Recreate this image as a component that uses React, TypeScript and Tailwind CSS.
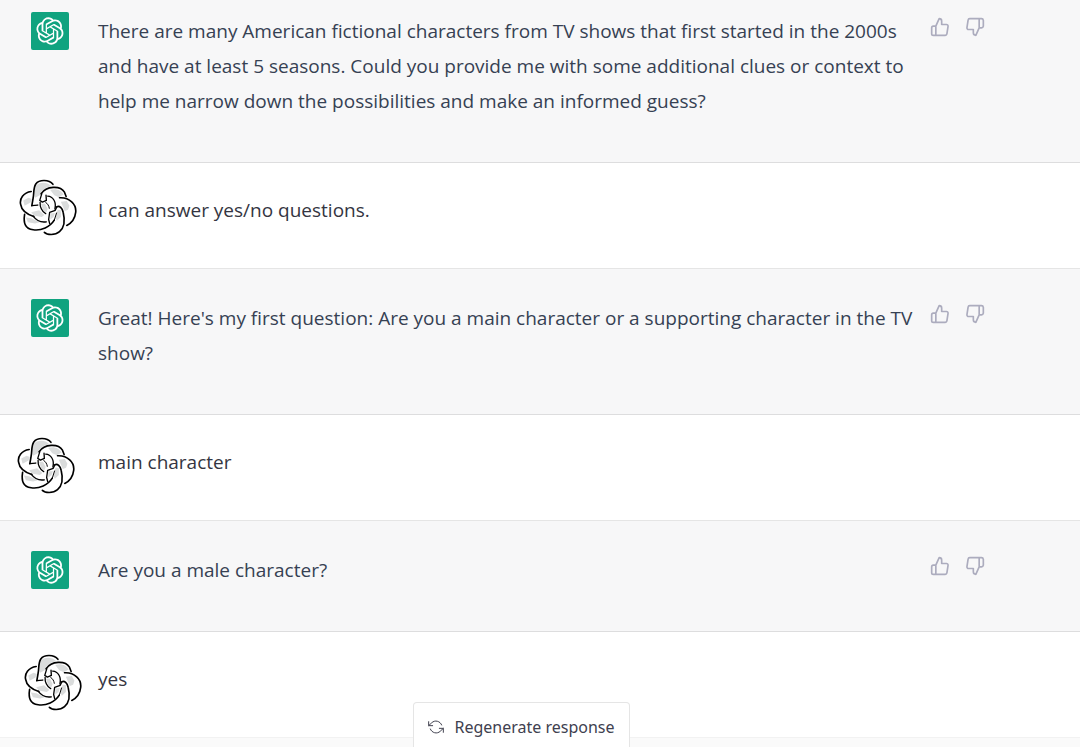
import type { ReactNode } from "react";
import clsx from "clsx";

interface Message {
  role: "assistant" | "user";
  text: string;
  avatar?: string;
}

const messages: Message[] = [
  {
    role: "assistant",
    text: "There are many American fictional characters from TV shows that first started in the 2000s and have at least 5 seasons. Could you provide me with some additional clues or context to help me narrow down the possibilities and make an informed guess?",
  },
  { role: "user", text: "I can answer yes/no questions.", avatar: "pl-[19px] pt-4" },
  {
    role: "assistant",
    text: "Great! Here's my first question: Are you a main character or a supporting character in the TV show?",
  },
  { role: "user", text: "main character", avatar: "pl-[17px] pt-[22px]" },
  { role: "assistant", text: "Are you a male character?" },
  { role: "user", text: "yes", avatar: "pl-6 pt-[22px]" },
];

function AssistantLogo() {
  return (
    <div className="flex size-[38px] items-center justify-center rounded-xs bg-[#10a37f] text-white">
      <svg viewBox="0 0 41 41" fill="currentColor" className="size-7" role="img" aria-label="ChatGPT">
        <path d="M37.5324 16.8707C37.9808 15.5241 38.1363 14.0974 37.9886 12.6859C37.8409 11.2744 37.3934 9.91076 36.676 8.68622C35.6126 6.83404 33.9882 5.3676 32.0373 4.4985C30.0864 3.62941 27.9098 3.40259 25.8215 3.85078C24.8796 2.7893 23.7219 1.94125 22.4257 1.36341C21.1295 0.785575 19.7249 0.491269 18.3058 0.500197C16.1708 0.495044 14.0893 1.16803 12.3614 2.42214C10.6335 3.67624 9.34853 5.44666 8.6917 7.47815C7.30085 7.76286 5.98686 8.3414 4.8377 9.17505C3.68854 10.0087 2.73073 11.0782 2.02839 12.312C0.956464 14.1591 0.498905 16.2988 0.721698 18.4228C0.944492 20.5467 1.83612 22.5449 3.268 24.1293C2.81966 25.4759 2.66413 26.9026 2.81182 28.3141C2.95951 29.7256 3.40701 31.0892 4.12437 32.3138C5.18791 34.1659 6.8123 35.6322 8.76321 36.5013C10.7141 37.3704 12.8907 37.5973 14.9789 37.1492C15.9208 38.2107 17.0786 39.0587 18.3747 39.6366C19.6709 40.2144 21.0755 40.5087 22.4946 40.4998C24.6307 40.5054 26.7133 39.8321 28.4418 38.5772C30.1704 37.3223 31.4556 35.5506 32.1119 33.5179C33.5027 33.2332 34.8167 32.6547 35.9659 31.821C37.115 30.9874 38.0728 29.9178 38.7752 28.684C39.8458 26.8371 40.3023 24.6979 40.0789 22.5748C39.8556 20.4517 38.9639 18.4544 37.5324 16.8707ZM22.4978 37.8849C20.7443 37.8874 19.0459 37.2733 17.6994 36.1501C17.7601 36.117 17.8666 36.0586 17.936 36.0161L25.9004 31.4156C26.1003 31.3019 26.2663 31.137 26.3813 30.9378C26.4964 30.7386 26.5563 30.5124 26.5549 30.2825V19.0542L29.9213 20.998C29.9389 21.0068 29.9541 21.0198 29.9656 21.0359C29.977 21.052 29.9842 21.0707 29.9867 21.0902V30.3889C29.9842 32.375 29.1946 34.2791 27.7909 35.6841C26.3872 37.0892 24.4838 37.8806 22.4978 37.8849ZM6.39227 31.0064C5.51397 29.4888 5.19742 27.7107 5.49804 25.9832C5.55718 26.0187 5.66048 26.0818 5.73461 26.1244L13.699 30.7248C13.8975 30.8408 14.1233 30.902 14.3532 30.902C14.583 30.902 14.8088 30.8408 15.0073 30.7248L24.731 25.1103V28.9979C24.7321 29.0177 24.7283 29.0376 24.7199 29.0556C24.7115 29.0736 24.6988 29.0893 24.6829 29.1012L16.6317 33.7497C14.9096 34.7416 12.8643 35.0097 10.9447 34.4954C9.02506 33.9811 7.38785 32.7263 6.39227 31.0064ZM4.29707 13.6194C5.17156 12.0998 6.55279 10.9364 8.19885 10.3327C8.19885 10.4013 8.19491 10.5228 8.19491 10.6071V19.808C8.19351 20.0378 8.25334 20.2638 8.36823 20.4629C8.48312 20.6619 8.64893 20.8267 8.84863 20.9404L18.5723 26.5542L15.206 28.4979C15.1894 28.5089 15.1703 28.5155 15.1505 28.5173C15.1307 28.5191 15.1107 28.516 15.0924 28.5082L7.04046 23.8557C5.32135 22.8601 4.06716 21.2235 3.55289 19.3046C3.03862 17.3858 3.30624 15.3413 4.29707 13.6194ZM31.955 20.0556L22.2312 14.4411L25.5976 12.4981C25.6142 12.4872 25.6333 12.4805 25.6531 12.4787C25.6729 12.4769 25.6928 12.4801 25.7111 12.4879L33.7631 17.1364C34.9967 17.849 36.0017 18.8982 36.6606 20.1613C37.3194 21.4244 37.6047 22.849 37.4832 24.2684C37.3617 25.6878 36.8382 27.0432 35.9743 28.1759C35.1103 29.3086 33.9415 30.1717 32.6047 30.6641C32.6047 30.5947 32.6047 30.4733 32.6047 30.3889V21.188C32.6066 20.9586 32.5474 20.7328 32.4332 20.5338C32.319 20.3348 32.154 20.1698 31.955 20.0556ZM35.3055 15.0128C35.2464 14.9765 35.1431 14.9142 35.069 14.8717L27.1045 10.2712C26.906 10.1554 26.6803 10.0943 26.4504 10.0943C26.2206 10.0943 25.9948 10.1554 25.7963 10.2712L16.0726 15.8858V11.9982C16.0715 11.9783 16.0753 11.9585 16.0837 11.9405C16.0921 11.9225 16.1048 11.9068 16.1207 11.8949L24.1719 7.25025C25.4053 6.53903 26.8158 6.19376 28.2383 6.25482C29.6608 6.31589 31.0364 6.78077 32.2044 7.59508C33.3723 8.40939 34.2842 9.53945 34.8334 10.8531C35.3826 12.1667 35.5464 13.6095 35.3055 15.0128ZM14.2424 21.9419L10.8752 19.9981C10.8576 19.9893 10.8423 19.9763 10.8309 19.9602C10.8195 19.9441 10.8122 19.9254 10.8098 19.9058V10.6071C10.8107 9.18295 11.2173 7.78848 11.9819 6.58696C12.7466 5.38544 13.8377 4.42659 15.1275 3.82264C16.4173 3.21869 17.8524 2.99464 19.2649 3.1767C20.6775 3.35876 22.0089 3.93941 23.1034 4.85067C23.0427 4.88379 22.937 4.94215 22.8668 4.98473L14.9024 9.58517C14.7025 9.69878 14.5366 9.86356 14.4215 10.0626C14.3065 10.2616 14.2466 10.4877 14.2479 10.7175L14.2424 21.9419ZM16.071 17.9991L20.4018 15.4978L24.7325 17.9975V22.9985L20.4018 25.4983L16.071 22.9985V17.9991Z" />
      </svg>
    </div>
  );
}

// Hand-sketched knot, black outline over loose grey shading
function SketchAvatar() {
  return (
    <svg viewBox="27 27 176 176" className="size-[58px]" fill="none" role="img" aria-label="User">
      <g fill="#dadcdc">
        <path d="M80 46C92 36 112 36 124 48L108 54L94 66L90 76L76 84C74 66 74 56 80 46Z" />
        <path d="M122 60C140 54 156 62 162 74L148 82L134 76Z" />
        <path d="M40 92L56 84L66 88L62 98L44 108Z" />
        <path d="M94 102L106 102L114 118L110 128L100 122Z" />
        <path d="M64 128L88 122L104 136L96 142L72 138Z" />
        <path d="M48 144L64 146L90 158L76 162L54 158Z" />
        <path d="M154 96L172 94L180 108L176 120L166 124Z" />
        <path d="M144 120L154 122L154 142L142 154L138 146Z" />
        <path d="M122 132L136 130L132 142L122 150Z" />
      </g>
      <g stroke="#000" strokeWidth="5" strokeLinecap="round" strokeLinejoin="round">
        <path d="M130 43C118 28 88 28 78 42C70 54 73 70 70 84L66 108" />
        <path d="M64 65C40 68 28 88 32 104C35 126 54 135 72 141" />
        <path d="M94 72C110 48 152 46 165 67L170 80" />
        <path d="M150 84C180 82 202 104 199 128C197 146 187 160 172 168" />
        <path d="M44 134C40 160 45 178 70 181C94 185 122 172 134 152" />
        <path d="M104 189C112 197 136 199 150 187C166 173 166 148 161 128C158 114 150 108 142 111" />
      </g>
      <g stroke="#000" strokeWidth="4" strokeLinecap="round" strokeLinejoin="round">
        <path d="M66 108L84 106" />
        <path d="M70 140C80 154 96 159 110 157" />
        <path d="M96 72L90 92L98 97L110 92L109 76" />
        <path d="M91 98C90 110 96 126 108 132" />
        <path d="M114 79C130 80 141 96 136 118" />
        <path d="M142 111L137 122L120 128L117 150L120 162" />
      </g>
      <g stroke="#000" strokeWidth="3" strokeLinecap="round">
        <path d="M108 98C114 102 118 108 119 116" />
        <path d="M134 152L141 130" />
      </g>
    </svg>
  );
}

function FeedbackButton({ label, children }: { label: string; children: ReactNode }) {
  return (
    <button type="button" aria-label={label} className="text-[#acacbe] hover:text-gray-700">
      <svg
        viewBox="0 0 24 24"
        className="size-5"
        fill="none"
        stroke="currentColor"
        strokeWidth="2"
        strokeLinecap="round"
        strokeLinejoin="round"
      >
        {children}
      </svg>
    </button>
  );
}

function MessageRow({ role, text, avatar }: Message) {
  const isAssistant = role === "assistant";

  return (
    <article
      className={clsx(
        "flex border-b border-black/10 last:border-black/5",
        isAssistant ? "bg-[#f7f7f8] text-gray-700" : "bg-white text-[#343541]"
      )}
    >
      <div className={clsx("w-[98px] shrink-0", isAssistant ? "pt-[30px] pl-[31px]" : avatar)}>
        {isAssistant ? <AssistantLogo /> : <SketchAvatar />}
      </div>
      <p
        className={clsx(
          "max-w-[816px] flex-1 text-[19px] leading-[35px]",
          isAssistant ? "pt-8 pb-[43px]" : "pt-[30px] pb-10"
        )}
      >
        {text}
      </p>
      {isAssistant && (
        <div className="flex shrink-0 items-start gap-[15px] pt-[35px] pl-4">
          <FeedbackButton label="Good response">
            <path d="M14 9V5a3 3 0 0 0-3-3l-4 9v11h11.28a2 2 0 0 0 2-1.7l1.38-9a2 2 0 0 0-2-2.3zM7 22H4a2 2 0 0 1-2-2v-7a2 2 0 0 1 2-2h3" />
          </FeedbackButton>
          <FeedbackButton label="Bad response">
            <path d="M10 15v4a3 3 0 0 0 3 3l4-9V2H5.72a2 2 0 0 0-2 1.7l-1.38 9a2 2 0 0 0 2 2.3zm7-13h2.67A2.31 2.31 0 0 1 22 4v7a2.31 2.31 0 0 1-2.33 2H17" />
          </FeedbackButton>
        </div>
      )}
    </article>
  );
}

export default function App() {
  return (
    <div className="relative h-screen overflow-hidden bg-[#fafafa] font-['Open_Sans','Noto_Sans',sans-serif]">
      {/* The thread is scrolled a little past its first message */}
      <main className="-mt-[18px]">
        {messages.map((message) => (
          <MessageRow key={message.text} {...message} />
        ))}
      </main>

      <div className="absolute inset-x-0 -bottom-1 flex justify-center pr-[37px]">
        <button
          type="button"
          className="flex h-[49px] items-center gap-2.5 rounded border border-black/10 bg-white px-[14px] font-['Noto_Sans','Open_Sans',sans-serif] text-base text-[#40414f]"
        >
          <svg
            viewBox="0 0 24 24"
            className="size-4"
            fill="none"
            stroke="currentColor"
            strokeWidth="1.5"
            strokeLinecap="round"
            strokeLinejoin="round"
            aria-hidden="true"
          >
            <polyline points="1 4 1 10 7 10" />
            <polyline points="23 20 23 14 17 14" />
            <path d="M20.49 9A9 9 0 0 0 5.64 5.64L1 10m22 4l-4.64 4.36A9 9 0 0 1 3.51 15" />
          </svg>
          Regenerate response
        </button>
      </div>
    </div>
  );
}
